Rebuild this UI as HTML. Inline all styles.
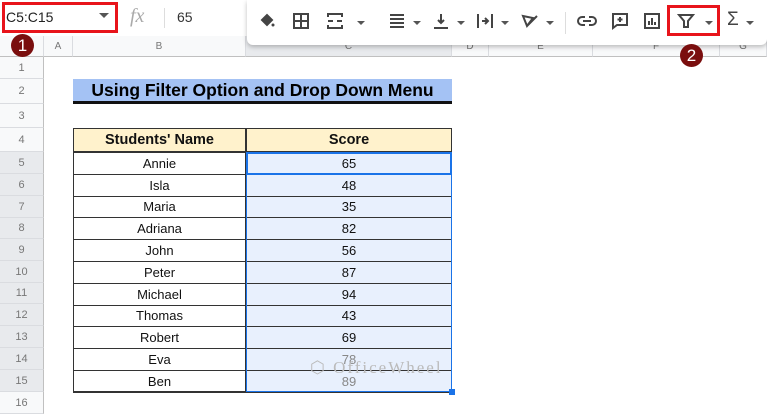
<!DOCTYPE html><html><head><style>
body{margin:0;width:767px;height:410px;position:relative;overflow:hidden;background:#fff;font-family:"Liberation Sans",Arial,sans-serif}
.a{position:absolute;box-sizing:border-box}
.rh{left:0;width:44px;background:#f8f9fa;border-bottom:1px solid #dadce0;border-right:1px solid #c0c0c0;color:#777;font-size:11px;display:flex;align-items:center;justify-content:center}
.sel{background:#e8eaed}
.ch{top:36px;height:21px;background:#f8f9fa;border-right:1px solid #dadce0;border-bottom:1px solid #c0c0c0;color:#777;font-size:10px;text-align:center;line-height:21px}
.c{font-size:13px;display:flex;align-items:center;justify-content:center;color:#111}
svg.i{position:absolute;top:12px}
.dd{position:absolute;top:21px;width:0;height:0;border-left:4px solid transparent;border-right:4px solid transparent;border-top:4px solid #555}
</style></head><body>
<div class="a" style="left:6px;top:9px;font-size:14px;color:#222">C5:C15</div>
<div class="a" style="left:99px;top:13px;width:0;height:0;border-left:5px solid transparent;border-right:5px solid transparent;border-top:5px solid #555"></div>
<div class="a" style="left:2px;top:2px;width:116px;height:31px;border:3px solid #e8141b"></div>
<div class="a" style="left:130px;top:5px;font-size:20px;font-style:italic;color:#aaa;font-family:'Liberation Serif',serif">fx</div>
<div class="a" style="left:164px;top:8px;width:1px;height:20px;background:#ddd"></div>
<div class="a" style="left:177px;top:9px;font-size:14px;color:#333">65</div>
<div class="a ch" style="left:0;width:44px;background:#f8f9fa"></div>
<div class="a ch" style="left:44px;width:29px">A</div>
<div class="a ch" style="left:73px;width:173px">B</div>
<div class="a ch" style="left:246px;width:206px;background:#e8eaed">C</div>
<div class="a ch" style="left:452px;width:37px">D</div>
<div class="a ch" style="left:489px;width:104px">E</div>
<div class="a ch" style="left:593px;width:127px">F</div>
<div class="a ch" style="left:720px;width:47px">G</div>
<div class="a rh" style="top:57px;height:22px">1</div>
<div class="a rh" style="top:79px;height:25px">2</div>
<div class="a rh" style="top:104px;height:24px">3</div>
<div class="a rh" style="top:128px;height:24px">4</div>
<div class="a rh sel" style="top:152px;height:22px">5</div>
<div class="a rh sel" style="top:174px;height:22px">6</div>
<div class="a rh sel" style="top:196px;height:22px">7</div>
<div class="a rh sel" style="top:218px;height:21px">8</div>
<div class="a rh sel" style="top:239px;height:22px">9</div>
<div class="a rh sel" style="top:261px;height:22px">10</div>
<div class="a rh sel" style="top:283px;height:21px">11</div>
<div class="a rh sel" style="top:304px;height:22px">12</div>
<div class="a rh sel" style="top:326px;height:22px">13</div>
<div class="a rh sel" style="top:348px;height:22px">14</div>
<div class="a rh sel" style="top:370px;height:22px">15</div>
<div class="a rh" style="top:392px;height:22px">16</div>
<div class="a" style="left:73px;top:79px;width:379px;height:25px;background:#a4c2f4;border-bottom:3px solid #111;font-weight:bold;font-size:17.5px;display:flex;align-items:center;justify-content:center">Using Filter Option and Drop Down Menu</div>
<div class="a" style="left:73px;top:128px;width:379px;height:264px;border:1.5px solid #333"></div>
<div class="a c" style="left:73px;top:128px;width:173px;height:24px;background:#fff2cc;border:1px solid #333;font-weight:bold;font-size:14.5px">Students' Name</div>
<div class="a c" style="left:246px;top:128px;width:206px;height:24px;background:#fff2cc;border:1px solid #333;font-weight:bold;font-size:14.5px">Score</div>
<div id="rows"></div>
<script>
var n=["Annie","Isla","Maria","Adriana","John","Peter","Michael","Thomas","Robert","Eva","Ben"],s=[65,48,35,82,56,87,94,43,69,78,89],h="";
for(var i=0;i<11;i++){var t=152+i*21.8;h+='<div class="a c" style="left:73px;top:'+t+'px;width:173px;height:22.8px;border:1px solid #333">'+n[i]+'</div><div class="a c" style="left:246px;top:'+t+'px;width:206px;height:22.8px;background:#e8f0fd;border:1px solid #333;'+(i>8?'color:#888':'')+'">'+s[i]+'</div>';}
document.getElementById("rows").innerHTML=h;
</script>
<div class="a" style="left:246px;top:152px;width:206px;height:240px;border:1px solid #1a73e8"></div>
<div class="a" style="left:246px;top:152px;width:206px;height:23px;border:2px solid #1a73e8"></div>
<div class="a" style="left:449px;top:389px;width:6px;height:6px;background:#1a73e8"></div>
<div class="a" style="left:310px;top:358px;font-size:17px;color:#bbb;letter-spacing:2px;font-family:'Liberation Serif',serif">⬡ OfficeWheel</div>
<!-- toolbar -->
<div class="a" style="left:247px;top:0;width:520px;height:45px;background:#fff;border-radius:0 0 6px 6px;box-shadow:0 2px 5px rgba(0,0,0,.25)"></div>
<svg class="i" style="left:258px" width="18" height="18" viewBox="0 0 18 18" fill="none" stroke="#444" stroke-width="2"><path d="M4 8l5-5 5 5-5 5z" fill="#444"/><circle cx="15" cy="13" r="1.5" fill="#444" stroke="none"/></svg>
<svg class="i" style="left:292px" width="18" height="18" viewBox="0 0 18 18" fill="none" stroke="#444" stroke-width="2"><rect x="2" y="2" width="14" height="14"/><path d="M9 2v14M2 9h14"/></svg>
<svg class="i" style="left:326px" width="18" height="18" viewBox="0 0 18 18" fill="none" stroke="#444" stroke-width="2"><path d="M2 5V2h14v3M2 13v3h14v-3M2 9h5M11 9h5"/></svg><div class="dd" style="left:357px"></div>
<svg class="i" style="left:388px" width="18" height="18" viewBox="0 0 18 18" fill="none" stroke="#444" stroke-width="2"><path d="M2 3h14M2 7h14M2 11h14M2 15h14"/></svg><div class="dd" style="left:413px"></div>
<svg class="i" style="left:432px" width="18" height="18" viewBox="0 0 18 18" fill="none" stroke="#444" stroke-width="2"><path d="M9 2v9M6 8l3 3 3-3M2 16h14"/></svg><div class="dd" style="left:457px"></div>
<svg class="i" style="left:476px" width="18" height="18" viewBox="0 0 18 18" fill="none" stroke="#444" stroke-width="2"><path d="M2 2v14M16 2v14M6 9h6M9 6l3 3-3 3"/></svg><div class="dd" style="left:501px"></div>
<svg class="i" style="left:521px" width="18" height="18" viewBox="0 0 18 18" fill="none" stroke="#444" stroke-width="2"><path d="M2 4l10 2-6 8zM6 14l10-10"/></svg><div class="dd" style="left:546px"></div>
<div class="a" style="left:565px;top:12px;width:1px;height:22px;background:#ddd"></div>
<svg class="i" style="left:577px" width="20" height="18" viewBox="0 0 20 18" fill="none" stroke="#444" stroke-width="2"><path d="M8 5H5a4 4 0 000 8h3M12 5h3a4 4 0 010 8h-3M6 9h8"/></svg>
<svg class="i" style="left:611px" width="18" height="18" viewBox="0 0 18 18" fill="none" stroke="#444" stroke-width="2"><path d="M2 2h14v11H6l-4 3zM9 5v5M6.5 7.5h5"/></svg>
<svg class="i" style="left:643px" width="18" height="18" viewBox="0 0 18 18" fill="none" stroke="#444" stroke-width="2"><rect x="2" y="2" width="14" height="14"/><path d="M6 13V9M9 13V6M12 13v-3"/></svg>
<svg class="i" style="left:677px" width="18" height="18" viewBox="0 0 18 18" fill="none" stroke="#444" stroke-width="2"><path d="M2 3h14l-5 6v6l-4 0v-6z"/></svg><div class="dd" style="left:705px"></div>
<div class="a" style="left:727px;top:9px;font-size:19px;color:#444">Σ</div><div class="dd" style="left:746px"></div>
<div class="a" style="left:667px;top:5px;width:53px;height:31px;border:3px solid #e8141b"></div>
<div class="a" style="left:11px;top:34px;width:23px;height:23px;border-radius:50%;background:#7a0e0e;color:#fff;font-size:17px;text-align:center;line-height:23px">1</div>
<div class="a" style="left:680px;top:44px;width:23px;height:23px;border-radius:50%;background:#7a0e0e;color:#fff;font-size:17px;text-align:center;line-height:23px">2</div>
</body></html>
